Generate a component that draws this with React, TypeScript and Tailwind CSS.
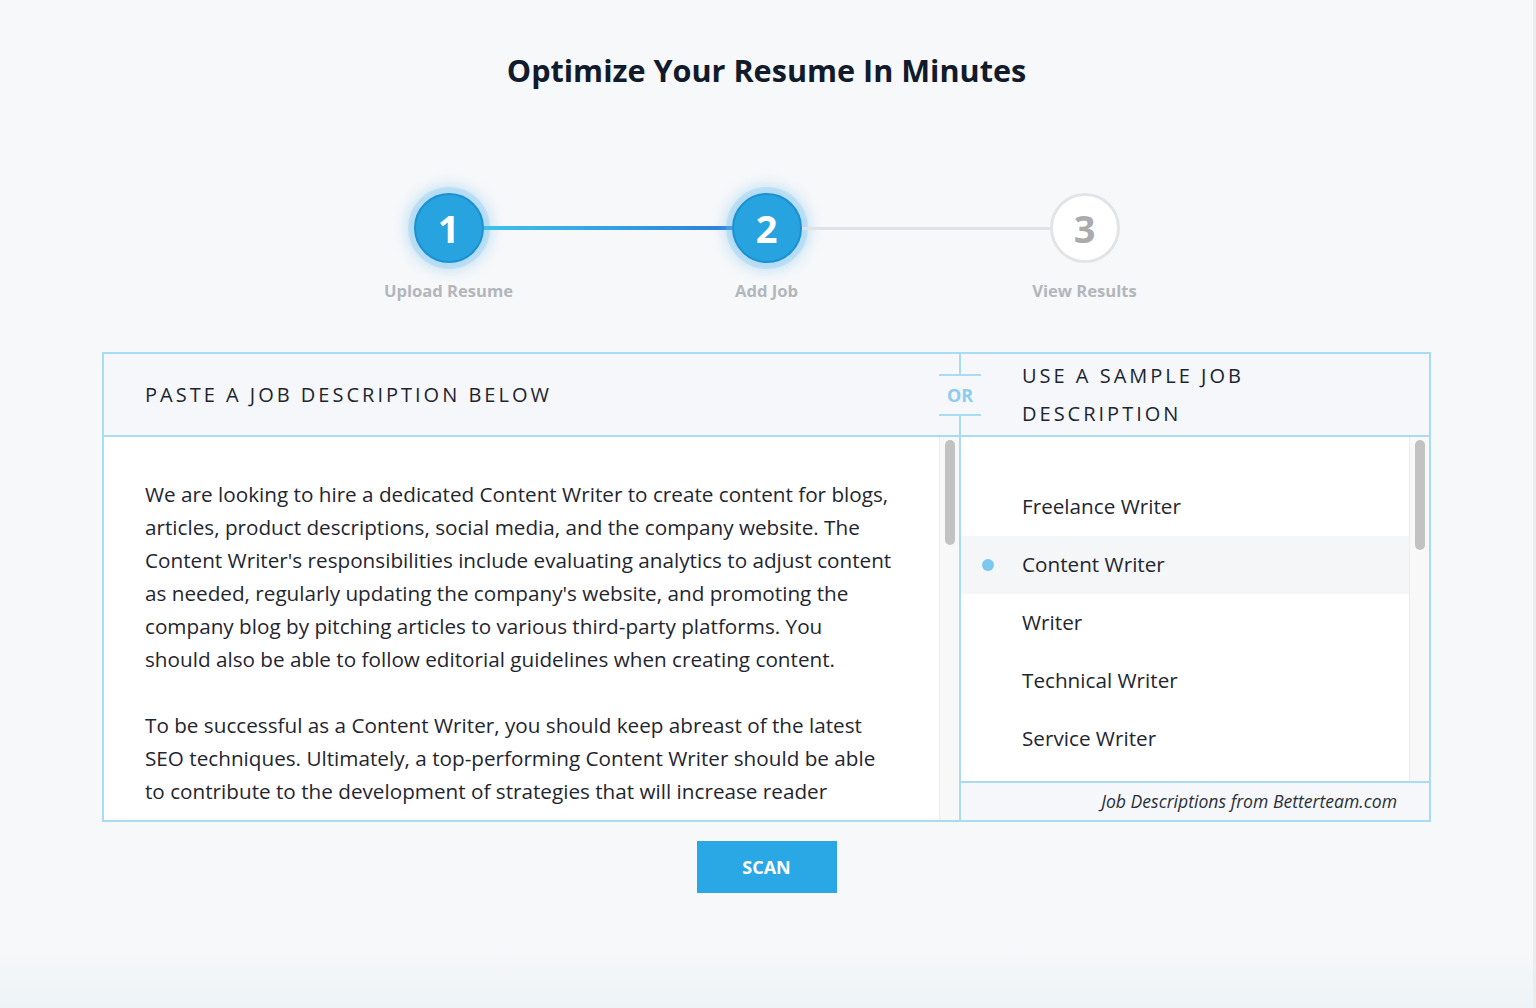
import * as React from "react";

const descriptionLines = [
  [
    "We are looking to hire a dedicated Content Writer to create content for blogs,",
    "articles, product descriptions, social media, and the company website. The",
    "Content Writer's responsibilities include evaluating analytics to adjust content",
    "as needed, regularly updating the company's website, and promoting the",
    "company blog by pitching articles to various third-party platforms. You",
    "should also be able to follow editorial guidelines when creating content.",
  ],
  [
    "To be successful as a Content Writer, you should keep abreast of the latest",
    "SEO techniques. Ultimately, a top-performing Content Writer should be able",
    "to contribute to the development of strategies that will increase reader",
  ],
];

const sampleJobs = [
  "Freelance Writer",
  "Content Writer",
  "Writer",
  "Technical Writer",
  "Service Writer",
];

function ActiveStep({ n }: { n: number }) {
  return (
    <div className="w-[70px] h-[70px] rounded-full bg-[#27a3e0] border-2 border-[#1d90cf] flex items-center justify-center text-white font-bold text-[38px] leading-none shadow-[0_0_0_6px_rgba(120,195,240,0.28),0_0_14px_8px_rgba(100,185,235,0.35)]">
      {n}
    </div>
  );
}

function Scrollbar({ thumb }: { thumb: string }) {
  return (
    <div className="w-[20px] shrink-0 bg-[#f8f8f9] border-l border-[#ececee] pt-[3px] flex justify-center">
      <div className={`w-[10px] rounded-full bg-[#c2c2c2] ${thumb}`} />
    </div>
  );
}

export default function App() {
  const [selected, setSelected] = React.useState("Content Writer");

  return (
    <div className="min-h-screen bg-[#f7f8fa] flex flex-col items-center border-r-[3px] border-[#ebecee] font-['Open_Sans',_'Noto_Sans',_sans-serif]">
      <h1 className="mt-[50px] text-[30.6px] leading-[40px] font-bold text-[#111b2b]">
        Optimize Your Resume In Minutes
      </h1>

      {/* stepper */}
      <div className="mt-[103px] flex items-center">
        <ActiveStep n={1} />
        <div className="w-[248px] h-[4px] bg-gradient-to-r from-[#3ec2ea] to-[#2d7fd8]" />
        <ActiveStep n={2} />
        <div className="w-[248px] h-[3px] bg-[#dfe3e8]" />
        <div className="w-[70px] h-[70px] rounded-full bg-white border-[3px] border-[#e3e4e6] flex items-center justify-center text-[#ababab] font-bold text-[38px] leading-none">
          3
        </div>
      </div>
      <div className="mt-[17px] grid grid-cols-3 w-[954px] text-center text-[16.6px] leading-[22px] font-bold text-[#b3b6ba]">
        <span>Upload Resume</span>
        <span>Add Job</span>
        <span>View Results</span>
      </div>

      {/* job panel */}
      <div className="mt-[50px] w-[1329px] h-[470px] border-2 border-[#a8dcf2] flex bg-white">
        <div className="w-[855px] flex flex-col">
          <div className="h-[83px] shrink-0 bg-[#f5f7fa] border-b-2 border-[#a8dcf2] flex items-center pl-[41px] text-[20px] tracking-[3px] text-[#1c2530]">
            PASTE A JOB DESCRIPTION BELOW
          </div>
          <div className="flex-1 flex min-h-0">
            <div className="flex-1 overflow-hidden pl-[41px] pt-[41px] text-[20.7px] leading-[33px] text-[#1f2630]">
              {descriptionLines.map((para, i) => (
                <p key={i} className={i > 0 ? "mt-[33px]" : ""}>
                  {para.map((line) => (
                    <span key={line} className="block whitespace-nowrap">
                      {line}
                    </span>
                  ))}
                </p>
              ))}
            </div>
            <Scrollbar thumb="h-[105px]" />
          </div>
        </div>

        <div className="relative flex-1 flex flex-col border-l-2 border-[#a8dcf2]">
          {/* OR marker sits on the divider */}
          <div className="absolute left-[-22px] top-[20px] w-[42px] h-[42px] bg-[#f5f7fa] border-y-2 border-[#a8dcf2] flex items-center justify-center text-[18px] font-bold text-[#8ccdee]">
            OR
          </div>
          <div className="h-[83px] shrink-0 bg-[#f5f7fa] border-b-2 border-[#a8dcf2] flex items-center pl-[61px]">
            <div className="w-[250px] text-[20px] leading-[38px] tracking-[3px] text-[#1c2530]">
              USE A SAMPLE JOB DESCRIPTION
            </div>
          </div>
          <div className="flex-1 flex min-h-0 bg-white">
            <ul className="flex-1 pt-[41px]">
              {sampleJobs.map((job) => {
                const active = job === selected;
                return (
                  <li
                    key={job}
                    onClick={() => setSelected(job)}
                    className={`h-[58px] flex items-center cursor-pointer text-[20.7px] text-[#1f2630] ${active ? "bg-[#f5f6f8]" : ""}`}
                  >
                    <span
                      className={`ml-[21px] mr-[28px] w-[12px] h-[12px] rounded-full ${active ? "bg-[#7cc7ef]" : ""}`}
                    />
                    {job}
                  </li>
                );
              })}
            </ul>
            <Scrollbar thumb="h-[110px]" />
          </div>
          <div className="h-[39px] shrink-0 bg-[#f5f7fa] border-t-2 border-[#a8dcf2] flex items-center justify-end pr-[32px] text-[17.6px] italic text-[#2a3038]">
            Job Descriptions from Betterteam.com
          </div>
        </div>
      </div>

      <button className="mt-[19px] w-[140px] h-[52px] bg-[#2aa8e6] text-white font-bold text-[18px]">
        SCAN
      </button>

      <div className="mt-auto w-full h-[60px] bg-gradient-to-b from-transparent to-[#edf3f7]" />
    </div>
  );
}
